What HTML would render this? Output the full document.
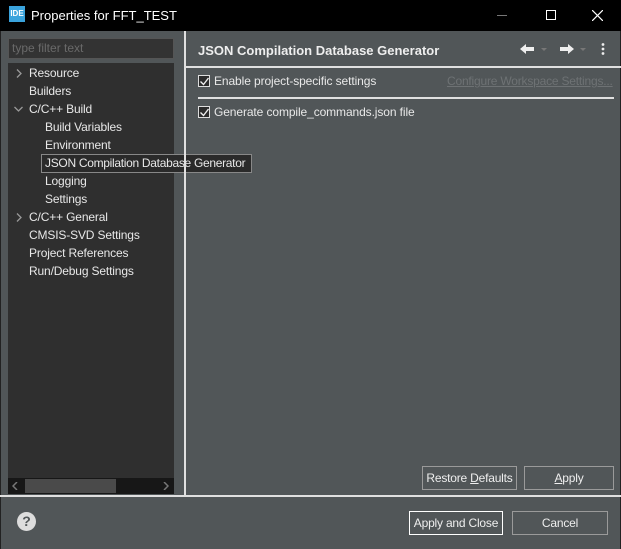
<!DOCTYPE html>
<html><head><style>
*{margin:0;padding:0;box-sizing:border-box}
body{width:621px;height:549px;background:#515658;font-family:"Liberation Sans",sans-serif;font-size:12px;color:#e8e8e8;position:relative;overflow:hidden}
.a{position:absolute}
.t{white-space:nowrap}
.btn{position:absolute;border:1px solid #9a9a9a;color:#eee;text-align:center;line-height:22px;font-size:12px;letter-spacing:-0.2px}
.cb{position:absolute;width:12px;height:12px;border:1px solid #ddd;background:#2b2b2b}
.cb svg{position:absolute;left:0;top:0}
.tree .t{letter-spacing:-0.15px}
</style></head><body>
<div class="a" style="left:0;top:0;width:621px;height:31px;background:#000"></div>
<div class="a" style="left:9px;top:6px;width:16px;height:16px;background:#3aa3dc;color:#fff;font-size:8px;font-weight:bold;line-height:16px;text-align:center">IDE</div>
<div class="a t" style="left:31px;top:8px;font-size:13px;color:#fff">Properties for FFT_TEST</div>
<div class="a" style="left:497px;top:15px;width:10px;height:1px;background:#777"></div>
<div class="a" style="left:546px;top:10px;width:10px;height:10px;border:1px solid #fff"></div>
<svg class="a" style="left:592px;top:10px" width="11" height="11"><path d="M0 0L11 11M11 0L0 11" stroke="#fff" stroke-width="1.2"/></svg>
<div class="a" style="left:0;top:31px;width:1px;height:518px;background:#222"></div>
<div class="a" style="left:620px;top:31px;width:1px;height:518px;background:#222"></div>
<div class="a" style="left:8px;top:38px;width:166px;height:21px;background:#333;border:1px solid #555"></div>
<div class="a t" style="left:12px;top:41px;color:#6a6a6a">type filter text</div>
<div class="a" style="left:8px;top:63px;width:166px;height:415px;background:#2f2f2f"></div>
<div class="a" style="left:8px;top:478px;width:166px;height:16px;background:#171717"></div>
<div class="a" style="left:25px;top:479px;width:91px;height:14px;background:#4a4a4a"></div>
<svg class="a" style="left:12px;top:482px" width="6" height="8"><path d="M5 0L1 4L5 8" stroke="#777" stroke-width="1.5" fill="none"/></svg>
<svg class="a" style="left:163px;top:482px" width="6" height="8"><path d="M1 0L5 4L1 8" stroke="#777" stroke-width="1.5" fill="none"/></svg>
<div class="a tree" style="left:8px;top:64px;width:166px">
<svg class="a" style="left:8px;top:5px" width="6" height="9"><path d="M1 0.5L5 4.5L1 8.5" stroke="#999" stroke-width="1.3" fill="none"/></svg>
<div class="a t" style="left:21px;top:2px">Resource</div>
<div class="a t" style="left:21px;top:20px">Builders</div>
<svg class="a" style="left:6px;top:42px" width="9" height="6"><path d="M0.5 1L4.5 5L8.5 1" stroke="#999" stroke-width="1.3" fill="none"/></svg>
<div class="a t" style="left:21px;top:38px">C/C++ Build</div>
<div class="a t" style="left:37px;top:56px">Build Variables</div>
<div class="a t" style="left:37px;top:74px">Environment</div>
<div class="a t" style="left:37px;top:110px">Logging</div>
<div class="a t" style="left:37px;top:128px">Settings</div>
<svg class="a" style="left:8px;top:149px" width="6" height="9"><path d="M1 0.5L5 4.5L1 8.5" stroke="#999" stroke-width="1.3" fill="none"/></svg>
<div class="a t" style="left:21px;top:146px">C/C++ General</div>
<div class="a t" style="left:21px;top:164px">CMSIS-SVD Settings</div>
<div class="a t" style="left:21px;top:182px">Project References</div>
<div class="a t" style="left:21px;top:200px">Run/Debug Settings</div>
</div>
<div class="a t" style="left:41px;top:154px;width:211px;height:19px;background:#2a2a2a;border:1px solid #888;padding:1px 0 0 3px;letter-spacing:-0.3px">JSON Compilation Database Generator</div>
<div class="a" style="left:184px;top:31px;width:2px;height:464px;background:#e0e0e0"></div>
<div class="a" style="left:0;top:495px;width:621px;height:2px;background:#e0e0e0"></div>
<div class="a t" style="left:198px;top:43px;font-weight:bold;font-size:13px;color:#eee">JSON Compilation Database Generator</div>
<svg class="a" style="left:518px;top:42px" width="95" height="14">
<path d="M2 7L8 2V5H16V9H8V12Z" fill="#eee"/><path d="M23 6L29 6L26 9Z" fill="#777"/>
<path d="M56 7L50 2V5H42V9H50V12Z" fill="#eee"/><path d="M62 6L68 6L65 9Z" fill="#777"/>
<circle cx="85" cy="2.5" r="1.4" fill="#eee"/><circle cx="85" cy="7" r="1.4" fill="#eee"/><circle cx="85" cy="11.5" r="1.4" fill="#eee"/>
</svg>
<div class="a" style="left:186px;top:66px;width:435px;height:2px;background:#e0e0e0"></div>
<div class="cb" style="left:198px;top:75px"><svg width="11" height="11"><path d="M1.5 5.5L4.5 8.5L9.5 2" stroke="#eee" stroke-width="1.4" fill="none"/></svg></div>
<div class="a t" style="left:214px;top:74px;letter-spacing:-0.1px">Enable project-specific settings</div>
<div class="a t" style="left:447px;top:74px;color:#6e7274;text-decoration:underline;letter-spacing:-0.2px">Configure Workspace Settings...</div>
<div class="a" style="left:198px;top:97px;width:416px;height:2px;background:#e0e0e0"></div>
<div class="cb" style="left:198px;top:106px"><svg width="11" height="11"><path d="M1.5 5.5L4.5 8.5L9.5 2" stroke="#eee" stroke-width="1.4" fill="none"/></svg></div>
<div class="a t" style="left:214px;top:105px;letter-spacing:-0.1px">Generate compile_commands.json file</div>
<div class="btn" style="left:422px;top:466px;width:95px;height:24px">Restore <u>D</u>efaults</div>
<div class="btn" style="left:524px;top:466px;width:90px;height:24px"><u>A</u>pply</div>
<div class="a" style="left:17px;top:512px;width:19px;height:19px;border-radius:50%;background:#ddd;color:#515658;font-weight:bold;font-size:14px;text-align:center;line-height:19px">?</div>
<div class="btn" style="left:409px;top:511px;width:94px;height:24px;border:1px solid #fff">Apply and Close</div>
<div class="btn" style="left:512px;top:511px;width:96px;height:24px">Cancel</div>
</body></html>
